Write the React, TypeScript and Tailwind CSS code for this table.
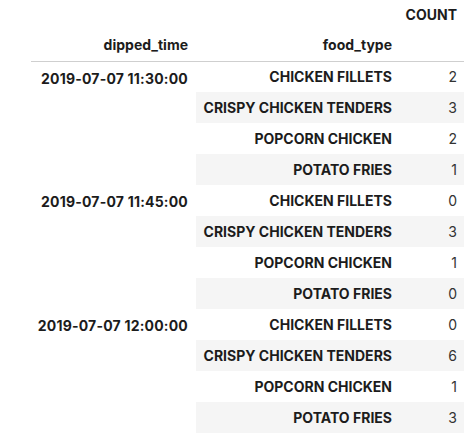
import React from 'react';

const groups = [
  { time: '2019-07-07 11:30:00', counts: [2, 3, 2, 1] },
  { time: '2019-07-07 11:45:00', counts: [0, 3, 1, 0] },
  { time: '2019-07-07 12:00:00', counts: [0, 6, 1, 3] },
];

const foods = ['CHICKEN FILLETS', 'CRISPY CHICKEN TENDERS', 'POPCORN CHICKEN', 'POTATO FRIES'];

export default function App() {
  return (
    <div className="w-[474px] h-[436px] bg-white overflow-hidden pl-[31px] font-['Inter','Liberation_Sans',sans-serif] text-[14px] text-[#1c1c1c]">
      <table className="border-collapse">
        <thead>
          <tr className="h-[28px]">
            <th className="w-[165px]"></th>
            <th className="w-[204px]"></th>
            <th className="w-[64px] text-right pr-[7px] font-bold">COUNT</th>
          </tr>
          <tr className="h-[33px] border-b border-[#cfcfcf]">
            <th className="text-right pr-[8px] font-bold">dipped_time</th>
            <th className="text-right pr-[8px] font-bold">food_type</th>
            <th></th>
          </tr>
        </thead>
        <tbody>
          {groups.map((g, gi) =>
            foods.map((f, fi) => (
              <tr key={g.time + f} className="h-[31px]">
                {fi === 0 && (
                  <th rowSpan={4} className="align-top text-right pr-[8px] pt-[6px] font-bold bg-white tracking-[0.2px]">
                    {g.time}
                  </th>
                )}
                <th className={`text-right pr-[8px] font-bold ${fi % 2 === 1 ? 'bg-[#f5f5f5]' : ''}`}>{f}</th>
                <td className={`text-right pr-[7px] font-normal text-[#333] ${fi % 2 === 1 ? 'bg-[#f5f5f5]' : ''}`}>
                  {g.counts[fi]}
                </td>
              </tr>
            ))
          )}
        </tbody>
      </table>
    </div>
  );
}
